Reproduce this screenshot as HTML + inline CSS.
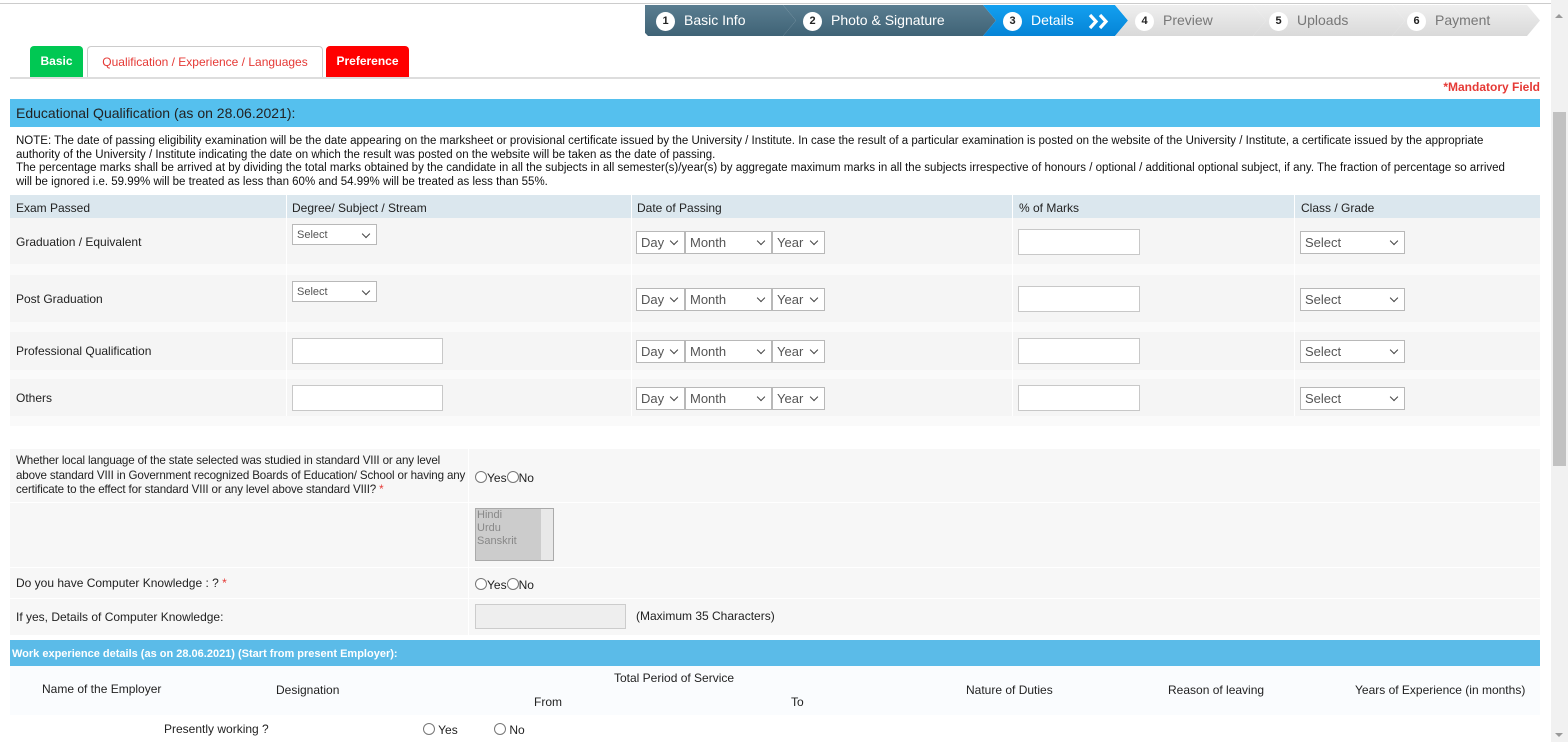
<!DOCTYPE html>
<html><head><meta charset="utf-8">
<style>
*{box-sizing:border-box;margin:0;padding:0}
body{width:1568px;height:742px;overflow:hidden;background:#fff;font-family:"Liberation Sans",Arial,sans-serif;font-size:12px;color:#222;position:relative}
.a{position:absolute}
.step{position:absolute;top:5px;height:31px;color:#fff;font-size:14px;line-height:31px;clip-path:polygon(0 0,calc(100% - 13px) 0,100% 50%,calc(100% - 13px) 100%,0 100%,13px 50%)}
.step .n{display:inline-block;width:19px;height:19px;border-radius:50%;background:#fff;color:#222;font-size:11px;font-weight:bold;line-height:19px;text-align:center;margin-right:9px;vertical-align:1px}
.dk{background:linear-gradient(#5a7d90,#3f6376)}
.bl{background:linear-gradient(#13a0f0,#0584d6)}
.gr{background:linear-gradient(#efefef,#d9d9d9);color:#777}
.tab{position:absolute;top:46px;height:31px;font-size:12px;font-weight:bold;line-height:31px;text-align:center;border-radius:4px 4px 0 0}
.cell{position:absolute;background:#f5f5f5}
.inp{position:absolute;background:#fff;border:1px solid #c8c8c8}
.sel{position:absolute;background:#fff;border:1px solid #b8b8b8;font-size:13px;color:#555;padding-left:4px;line-height:20px}
.sel:after{content:"";position:absolute;right:7px;top:6px;width:5px;height:5px;border-right:1.5px solid #444;border-bottom:1.5px solid #444;transform:rotate(45deg)}
.lbl{position:absolute;font-size:12px;color:#222}
.rad{display:inline-block;width:12px;height:12px;border:1px solid #777;border-radius:50%;background:#fff;vertical-align:-1px}
</style></head><body>
<div class="a" style="left:0;top:3px;width:1551px;height:1px;background:#ccc"></div>
<div class="a" style="left:1551px;top:0;width:17px;height:742px;background:#f1f1f1"></div>
<div class="a" style="left:1553px;top:112px;width:13px;height:354px;background:#c1c1c1"></div>
<div class="a" style="left:1555px;top:14px;width:0;height:0;border-left:4px solid transparent;border-right:4px solid transparent;border-bottom:4px solid #999"></div>
<div class="a" style="left:1555px;top:733px;width:0;height:0;border-left:4px solid transparent;border-right:4px solid transparent;border-top:4px solid #999"></div>

<div class="step dk" style="left:645px;width:151px;padding-left:11px;clip-path:polygon(0 0,calc(100% - 13px) 0,100% 50%,calc(100% - 13px) 100%,3px 100%,0 90%)"><span class="n">1</span>Basic Info</div>
<div class="step dk" style="left:783px;width:213px;padding-left:20px"><span class="n">2</span>Photo &amp; Signature</div>
<div class="step bl" style="left:983px;width:145px;padding-left:20px"><span class="n">3</span>Details</div>
<svg class="a" style="left:1088px;top:13px" width="24" height="17" viewBox="0 0 24 17"><path d="M2 2 L8 8.5 L2 15 M12 2 L18 8.5 L12 15" fill="none" stroke="#fff" stroke-width="3.2"/></svg>
<div class="step gr" style="left:1115px;width:151px;padding-left:20px"><span class="n">4</span>Preview</div>
<div class="step gr" style="left:1253px;width:152px;padding-left:16px"><span class="n">5</span>Uploads</div>
<div class="step gr" style="left:1392px;width:148px;padding-left:15px"><span class="n">6</span>Payment</div>

<div class="tab" style="left:30px;width:53px;background:#00c853;color:#fff">Basic</div>
<div class="tab" style="left:87px;width:236px;background:#fff;border:1px solid #ccc;border-bottom:none;color:#e53935;font-weight:normal">Qualification / Experience / Languages</div>
<div class="tab" style="left:326px;width:83px;background:#f00;color:#fff">Preference</div>
<div class="a" style="left:10px;top:77px;width:1530px;height:2px;background:#ddd"></div>
<div class="a" style="right:28px;top:80px;font-size:12px;font-weight:bold;color:#e53935">*Mandatory Field</div>

<div class="a" style="left:10px;top:99px;width:1530px;height:28px;background:#55c0ee;font-size:14px;line-height:28px;padding-left:6px;color:#222">Educational Qualification (as on 28.06.2021):</div>
<div class="a" style="left:16px;top:135px;width:1500px;font-size:11.5px;line-height:13.6px;color:#111">NOTE: The date of passing eligibility examination will be the date appearing on the marksheet or provisional certificate issued by the University / Institute. In case the result of a particular examination is posted on the website of the University / Institute, a certificate issued by the appropriate authority of the University / Institute indicating the date on which the result was posted on the website will be taken as the date of passing.<br>The percentage marks shall be arrived at by dividing the total marks obtained by the candidate in all the subjects in all semester(s)/year(s) by aggregate maximum marks in all the subjects irrespective of honours / optional / additional optional subject, if any. The fraction of percentage so arrived will be ignored i.e. 59.99% will be treated as less than 60% and 54.99% will be treated as less than 55%.</div>

<div class="a" style="left:10px;top:195px;width:1530px;height:23px;background:#dbe7ee"></div>
<div class="a" style="left:286px;top:195px;width:1px;height:23px;background:#fff"></div>
<div class="a" style="left:631px;top:195px;width:1px;height:23px;background:#fff"></div>
<div class="a" style="left:1012px;top:195px;width:1px;height:23px;background:#fff"></div>
<div class="a" style="left:1294px;top:195px;width:1px;height:23px;background:#fff"></div>
<div class="lbl" style="left:16px;top:201px">Exam Passed</div>
<div class="lbl" style="left:292px;top:201px">Degree/ Subject / Stream</div>
<div class="lbl" style="left:637px;top:201px">Date of Passing</div>
<div class="lbl" style="left:1019px;top:201px">% of Marks</div>
<div class="lbl" style="left:1301px;top:201px">Class / Grade</div>

<div class="a" style="left:10px;top:218px;width:1530px;height:208px;background:#fafafa"></div>
<div class="cell" style="left:10px;top:218px;width:1530px;height:46px"></div>
<div class="cell" style="left:10px;top:275px;width:1530px;height:47px"></div>
<div class="cell" style="left:10px;top:332px;width:1530px;height:38px"></div>
<div class="cell" style="left:10px;top:379px;width:1530px;height:37px"></div>
<div class="a" style="left:286px;top:218px;width:1px;height:198px;background:#fff"></div>
<div class="a" style="left:631px;top:218px;width:1px;height:198px;background:#fff"></div>
<div class="a" style="left:1012px;top:218px;width:1px;height:198px;background:#fff"></div>
<div class="a" style="left:1294px;top:218px;width:1px;height:198px;background:#fff"></div>

<div class="lbl" style="left:16px;top:235px">Graduation / Equivalent</div>
<div class="lbl" style="left:16px;top:292px">Post Graduation</div>
<div class="lbl" style="left:16px;top:344px">Professional Qualification</div>
<div class="lbl" style="left:16px;top:391px">Others</div>

<div class="sel" style="left:292px;top:224px;width:85px;height:21px;font-size:11px">Select</div>
<div class="sel" style="left:292px;top:281px;width:85px;height:21px;font-size:11px">Select</div>
<div class="inp" style="left:292px;top:338px;width:151px;height:26px"></div>
<div class="inp" style="left:292px;top:385px;width:151px;height:26px"></div>

<div class="sel" style="left:636px;top:231px;width:49px;height:23px;line-height:22px">Day</div>
<div class="sel" style="left:685px;top:231px;width:87px;height:23px;line-height:22px">Month</div>
<div class="sel" style="left:772px;top:231px;width:53px;height:23px;line-height:22px">Year</div>
<div class="sel" style="left:636px;top:288px;width:49px;height:23px;line-height:22px">Day</div>
<div class="sel" style="left:685px;top:288px;width:87px;height:23px;line-height:22px">Month</div>
<div class="sel" style="left:772px;top:288px;width:53px;height:23px;line-height:22px">Year</div>
<div class="sel" style="left:636px;top:340px;width:49px;height:23px;line-height:22px">Day</div>
<div class="sel" style="left:685px;top:340px;width:87px;height:23px;line-height:22px">Month</div>
<div class="sel" style="left:772px;top:340px;width:53px;height:23px;line-height:22px">Year</div>
<div class="sel" style="left:636px;top:387px;width:49px;height:23px;line-height:22px">Day</div>
<div class="sel" style="left:685px;top:387px;width:87px;height:23px;line-height:22px">Month</div>
<div class="sel" style="left:772px;top:387px;width:53px;height:23px;line-height:22px">Year</div>

<div class="inp" style="left:1018px;top:229px;width:122px;height:26px"></div>
<div class="inp" style="left:1018px;top:286px;width:122px;height:26px"></div>
<div class="inp" style="left:1018px;top:338px;width:122px;height:26px"></div>
<div class="inp" style="left:1018px;top:385px;width:122px;height:26px"></div>

<div class="sel" style="left:1300px;top:231px;width:105px;height:23px;line-height:22px">Select</div>
<div class="sel" style="left:1300px;top:288px;width:105px;height:23px;line-height:22px">Select</div>
<div class="sel" style="left:1300px;top:340px;width:105px;height:23px;line-height:22px">Select</div>
<div class="sel" style="left:1300px;top:387px;width:105px;height:23px;line-height:22px">Select</div>

<div class="cell" style="left:10px;top:449px;width:1530px;height:186px;background:#f7f7f7"></div>
<div class="a" style="left:468px;top:449px;width:1px;height:186px;background:#fff"></div>
<div class="a" style="left:10px;top:502px;width:1530px;height:1px;background:#fff"></div>
<div class="a" style="left:10px;top:567px;width:1530px;height:1px;background:#fff"></div>
<div class="a" style="left:10px;top:598px;width:1530px;height:1px;background:#fff"></div>
<div class="lbl" style="left:16px;top:454px;line-height:14.5px;width:450px;font-size:11.6px;letter-spacing:-0.15px">Whether local language of the state selected was studied in standard VIII or any level above standard VIII in Government recognized Boards of Education/ School or having any certificate to the effect for standard VIII or any level above standard VIII? <span style="color:#e53935">*</span></div>
<div class="lbl" style="left:475px;top:471px"><span class="rad"></span>Yes<span class="rad"></span>No</div>
<div class="a" style="left:475px;top:508px;width:79px;height:53px;background:#ccc;border:1px solid #aaa;font-size:11px;color:#888;padding-left:1px;line-height:13px">Hindi<br>Urdu<br>Sanskrit
<div class="a" style="right:0;top:0;width:12px;height:51px;background:#e8e8e8"></div></div>
<div class="lbl" style="left:16px;top:576px">Do you have Computer Knowledge : ? <span style="color:#e53935">*</span></div>
<div class="lbl" style="left:475px;top:578px"><span class="rad"></span>Yes<span class="rad"></span>No</div>
<div class="lbl" style="left:16px;top:610px">If yes, Details of Computer Knowledge:</div>
<div class="a" style="left:475px;top:604px;width:151px;height:25px;background:#eee;border:1px solid #ccc"></div>
<div class="lbl" style="left:636px;top:609px">(Maximum 35 Characters)</div>

<div class="a" style="left:10px;top:640px;width:1530px;height:26px;background:#5bbbe8;color:#fff;font-weight:bold;font-size:11px;line-height:28px;padding-left:2px">Work experience details (as on 28.06.2021) (Start from present Employer):</div>
<div class="a" style="left:10px;top:666px;width:1530px;height:49px;background:#fafcfe"></div>
<div class="lbl" style="left:42px;top:682px">Name of the Employer</div>
<div class="lbl" style="left:276px;top:683px">Designation</div>
<div class="lbl" style="left:614px;top:671px">Total Period of Service</div>
<div class="lbl" style="left:534px;top:695px">From</div>
<div class="lbl" style="left:791px;top:695px">To</div>
<div class="lbl" style="left:966px;top:683px">Nature of Duties</div>
<div class="lbl" style="left:1168px;top:683px">Reason of leaving</div>
<div class="lbl" style="left:1355px;top:683px">Years of Experience (in months)</div>
<div class="lbl" style="left:164px;top:722px">Presently working ?</div>
<div class="lbl" style="left:423px;top:723px"><span class="rad"></span> Yes</div>
<div class="lbl" style="left:494px;top:723px"><span class="rad"></span> No</div>
</body></html>
